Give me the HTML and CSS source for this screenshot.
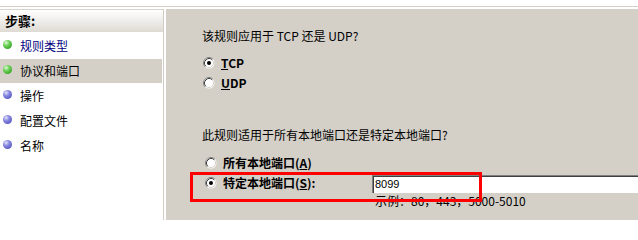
FILE: index.html
```html
<!DOCTYPE html>
<html lang="zh-CN">
<head>
<meta charset="utf-8">
<title>新建入站规则向导</title>
<link rel="stylesheet" href="styles.css">
</head>
<body>
<div class="topline"></div>
<div class="main">
  <aside class="steps">
    <div class="steps-head">步骤:</div>
    <ul class="step-list">
      <li class="step done link"><span class="dot green"></span>规则类型</li>
      <li class="step current"><span class="dot green"></span>协议和端口</li>
      <li class="step"><span class="dot blue"></span>操作</li>
      <li class="step"><span class="dot blue"></span>配置文件</li>
      <li class="step"><span class="dot blue"></span>名称</li>
    </ul>
  </aside>
  <section class="content">
    <p class="question q1">该规则应用于 TCP 还是 UDP?</p>
    <div class="radio-row g1">
      <svg class="radio" width="12" height="12" viewBox="0 0 12 12"><circle cx="6" cy="6" r="5.5" fill="#fff"/><path d="M2.11 9.89A5.5 5.5 0 0 1 9.89 2.11" fill="none" stroke="#808080"/><path d="M2.82 9.18A4.5 4.5 0 0 1 9.18 2.82" fill="none" stroke="#404040"/><path d="M9.18 2.82A4.5 4.5 0 0 1 2.82 9.18" fill="none" stroke="#d4d0c8"/><circle cx="6" cy="6" r="2" fill="#000"/></svg>
      <span class="opt"><u>T</u>CP</span>
    </div>
    <div class="radio-row g1">
      <svg class="radio" width="12" height="12" viewBox="0 0 12 12"><circle cx="6" cy="6" r="5.5" fill="#fff"/><path d="M2.11 9.89A5.5 5.5 0 0 1 9.89 2.11" fill="none" stroke="#808080"/><path d="M2.82 9.18A4.5 4.5 0 0 1 9.18 2.82" fill="none" stroke="#404040"/><path d="M9.18 2.82A4.5 4.5 0 0 1 2.82 9.18" fill="none" stroke="#d4d0c8"/></svg>
      <span class="opt"><u>U</u>DP</span>
    </div>
    <p class="question q2">此规则适用于所有本地端口还是特定本地端口?</p>
    <div class="radio-row g2 all">
      <svg class="radio" width="12" height="12" viewBox="0 0 12 12"><circle cx="6" cy="6" r="5.5" fill="#fff"/><path d="M2.11 9.89A5.5 5.5 0 0 1 9.89 2.11" fill="none" stroke="#808080"/><path d="M2.82 9.18A4.5 4.5 0 0 1 9.18 2.82" fill="none" stroke="#404040"/><path d="M9.18 2.82A4.5 4.5 0 0 1 2.82 9.18" fill="none" stroke="#d4d0c8"/></svg>
      <span class="opt">所有本地端口(<u>A</u>)</span>
    </div>
    <div class="radio-row g2 specific">
      <svg class="radio" width="12" height="12" viewBox="0 0 12 12"><circle cx="6" cy="6" r="5.5" fill="#fff"/><path d="M2.11 9.89A5.5 5.5 0 0 1 9.89 2.11" fill="none" stroke="#808080"/><path d="M2.82 9.18A4.5 4.5 0 0 1 9.18 2.82" fill="none" stroke="#404040"/><path d="M9.18 2.82A4.5 4.5 0 0 1 2.82 9.18" fill="none" stroke="#d4d0c8"/><circle cx="6" cy="6" r="2" fill="#000"/></svg>
      <span class="opt port-label">特定本地端口(<u>S</u>):</span>
      <div class="port-input">8099</div>
    </div>
    <p class="hint">示例：80，443，5000-5010</p>
    <div class="highlight"></div>
  </section>
</div>
</body>
</html>
```
FILE: styles.css
```css
* { box-sizing: border-box; }
html, body { margin: 0; padding: 0; }
body {
  width: 638px;
  height: 220px;
  overflow: hidden;
  background: #fff;
  font-family: "Noto Sans CJK SC", "DejaVu Sans", sans-serif;
  font-size: 12px;
  color: #000;
  padding-top: 6px;
}
.topline { height: 1px; background: #d4d0c8; }
.main {
  display: flex;
  margin-top: 2px;
  height: 211px;
}
.steps {
  width: 164px;
  border-right: 1px solid #d0ccc4;
  margin-right: 2px;
  background: #fff;
  flex: none;
}
.steps-head {
  height: 23px;
  border-top: 1px solid #d6d3cc;
  background: linear-gradient(#ffffff, #dedbd4);
  font-weight: bold;
  font-size: 13px;
  line-height: 22px;
  padding-left: 5px;
}
.step-list {
  list-style: none;
  margin: 2px 0 0;
  padding: 0;
  display: flex;
  flex-direction: column;
  gap: 1px;
}
.step {
  height: 24px;
  line-height: 24px;
  display: flex;
  align-items: center;
  padding-left: 3px;
  margin-right: 1px;
}
.step.link { color: #000080; }
.step.current { background: #d4d0c8; }
.dot {
  width: 9px;
  height: 9px;
  border-radius: 50%;
  margin-right: 8px;
  margin-top: -4px;
  flex: none;
}
.dot.green { background: radial-gradient(circle at 35% 30%, #e6fadc 0, #6fd25a 35%, #3aa82a 75%, #2b8a20 100%); }
.dot.blue { background: radial-gradient(circle at 35% 30%, #e4e4fa 0, #8a8ae0 35%, #5a5ac8 75%, #4545a8 100%); }

.content {
  position: relative;
  flex: 1;
  background: #d4d0c8;
  padding: 19px 0 0 36px;
  overflow: hidden;
}
.question {
  margin: 0;
  line-height: 16px;
  height: 16px;
}
.radio-row {
  display: flex;
  align-items: center;
  height: 20px;
}
.radio { flex: none; display: block; }
.g1 .radio { margin-left: 1px; }
.g2 .radio { margin-left: 3px; }
.opt {
  font-weight: bold;
  margin-left: 6px;
  line-height: 16px;
}
.q1 + .radio-row { margin-top: 9px; }
.q2 { margin-top: 34px; }
.all { margin-top: 10px; }
.port-label { width: 149px; flex: none; }
.port-input {
  align-self: flex-end;
  height: 18px;
  width: 300px;
  flex: none;
  background: #fff;
  border-top: 1px solid #808080;
  border-left: 1px solid #808080;
  box-shadow: inset 1px 1px 0 #404040;
  font-family: "Liberation Sans", Arial, sans-serif;
  font-size: 11px;
  line-height: 17px;
  padding-left: 2px;
}
.hint {
  margin: 0 0 0 173px;
  line-height: 16px;
}
.highlight {
  position: absolute;
  left: 24px;
  top: 163px;
  width: 292px;
  height: 30px;
  border: 3px solid #ff0000;
}
```
